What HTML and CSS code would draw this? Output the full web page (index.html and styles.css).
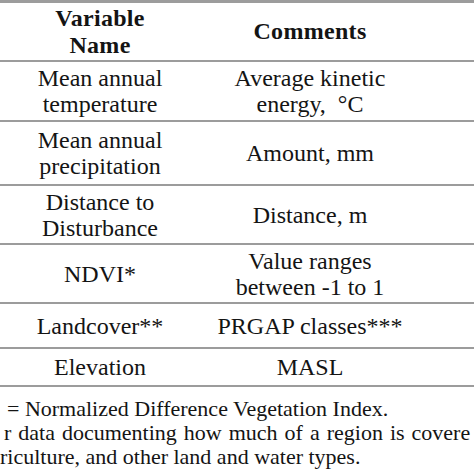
FILE: index.html
```html
<!DOCTYPE html>
<html>
<head>
<meta charset="utf-8">
<link rel="stylesheet" href="styles.css">
</head>
<body>
<div class="page">
  <div class="table">
    <div class="row head h60">
      <div class="cell">Variable<br>Name</div>
      <div class="cell">Comments</div>
    </div>
    <div class="row h60">
      <div class="cell">Mean annual<br>temperature</div>
      <div class="cell">Average kinetic<br>energy,&nbsp; °C</div>
    </div>
    <div class="row h64">
      <div class="cell">Mean annual<br>precipitation</div>
      <div class="cell">Amount, mm</div>
    </div>
    <div class="row h59">
      <div class="cell">Distance to<br>Disturbance</div>
      <div class="cell">Distance, m</div>
    </div>
    <div class="row h59">
      <div class="cell">NDVI*</div>
      <div class="cell">Value ranges<br>between -1 to 1</div>
    </div>
    <div class="row h45">
      <div class="cell">Landcover**</div>
      <div class="cell">PRGAP classes***</div>
    </div>
    <div class="row h38 last">
      <div class="cell">Elevation</div>
      <div class="cell">MASL</div>
    </div>
  </div>
  <div class="notes">
    <div class="note first">= Normalized Difference Vegetation Index.</div>
    <div class="note wide">r data documenting how much of a region is covere</div>
    <div class="note">riculture, and other land and water types.</div>
  </div>
</div>
</body>
</html>
```

FILE: styles.css
```css
html, body {
  margin: 0;
  padding: 0;
  background: #ffffff;
}
body {
  width: 474px;
  height: 474px;
  overflow: hidden;
  font-family: "Liberation Serif", "Times New Roman", serif;
  color: #141414;
}
.page {
  width: 474px;
}
.table {
  display: flex;
  flex-direction: column;
}
.row {
  display: grid;
  grid-template-columns: 200px 220px 1fr;
  align-items: center;
  border-top: 2px solid #9c9c9c;
  box-sizing: border-box;
  font-size: 24px;
  line-height: 26px;
}
.row.head {
  border-top-width: 3px;
  font-weight: bold;
  line-height: 27px;
  letter-spacing: 0.3px;
}
.row.last {
  border-bottom: 2px solid #9c9c9c;
}
.h60 { height: 60px; }
.h64 { height: 64px; }
.h59 { height: 59px; }
.h45 { height: 45px; }
.h38 { height: 38px; }
.row.last.h38 { height: 40px; }
.cell {
  text-align: center;
}
.notes {
  padding-top: 10px;
  font-size: 22px;
  line-height: 24px;
  overflow: hidden;
}
.note {
  white-space: nowrap;
}
.note.first {
  padding-left: 7px;
}
.note.wide {
  padding-left: 4px;
  word-spacing: 1.5px;
}
```
